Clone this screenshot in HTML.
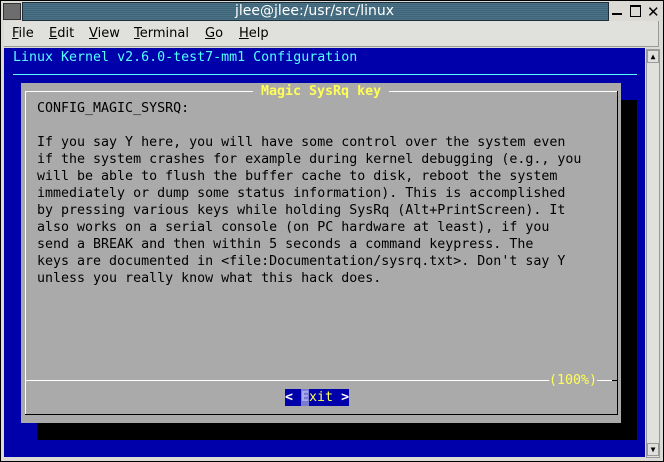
<!DOCTYPE html><html><head><style>
*{margin:0;padding:0}
body{width:664px;height:462px;background:#dcdad5;position:relative;overflow:hidden;font-family:"DejaVu Sans Mono","Liberation Mono",monospace}
.a{position:absolute}
.r{position:absolute;white-space:pre;font-size:13.3px;line-height:17px;height:17px}
.m{position:absolute;top:26px;font:13px 'DejaVu Sans',sans-serif;color:#000}
</style></head><body>
<div class="a" style="left:0;top:0;width:664px;height:462px;background:#dcdad5;border:1px solid #000;box-sizing:border-box"></div>
<div class="a" style="left:3px;top:3px;width:16px;height:15px;background:#6d6d6d;border:1px solid #333"></div>
<div class="a" style="left:22px;top:2px;width:585px;height:17px;background:repeating-linear-gradient(#4a7387 0 1px,#3f6478 1px 2px);border:1px solid #1d2e38"></div>
<div class="a" style="left:22px;top:2px;width:585px;height:17px;color:#fff;font:14px 'DejaVu Sans',sans-serif;text-align:center;line-height:18px">jlee@jlee:/usr/src/linux</div>
<div class="a" style="left:612px;top:13px;width:10px;height:2px;background:#000"></div>
<div class="a" style="left:630px;top:5px;width:9px;height:9px;border:1px solid #000;border-top-width:2px"></div>
<div class="a" style="left:647px;top:3px;font:bold 15px 'DejaVu Sans',sans-serif;color:#000">✕</div>
<div class="a" style="left:4px;top:21px;width:654px;height:25px;background:#e0e0dc;border-right:1px solid #999;border-bottom:1px solid #999"></div>
<div class="m" style="left:12px"><u>F</u>ile</div>
<div class="m" style="left:49px"><u>E</u>dit</div>
<div class="m" style="left:89px"><u>V</u>iew</div>
<div class="m" style="left:134px"><u>T</u>erminal</div>
<div class="m" style="left:205px"><u>G</u>o</div>
<div class="m" style="left:239px"><u>H</u>elp</div>
<div class="a" style="left:4px;top:48px;width:641px;height:409px;background:#0000aa"></div>
<div class="a" style="left:646px;top:49px;width:14px;height:409px;background:#e0e0dc;border:1px solid #999;box-sizing:border-box"></div>
<div class="a" style="left:647px;top:50px;width:12px;height:13px;border:1px solid #999;box-sizing:border-box;font-size:8px;text-align:center;line-height:12px">▲</div>
<div class="a" style="left:647px;top:443px;width:12px;height:13px;border:1px solid #999;box-sizing:border-box;font-size:8px;text-align:center;line-height:12px">▼</div>
<div class="r" style="left:13px;top:49px;color:#55ffff">Linux Kernel v2.6.0-test7-mm1 Configuration</div>
<div class="a" style="left:13px;top:74px;width:624px;height:1px;background:#55ffff"></div>
<div class="a" style="left:37px;top:100px;width:600px;height:340px;background:#000"></div>
<div class="a" style="left:21px;top:83px;width:600px;height:340px;background:#aaaaaa"></div>
<div class="a" style="left:25px;top:91px;width:592px;height:1px;background:#fff"></div>
<div class="a" style="left:25px;top:91px;width:1px;height:323px;background:#fff"></div>
<div class="a" style="left:25px;top:414px;width:593px;height:1px;background:#000"></div>
<div class="a" style="left:617px;top:91px;width:1px;height:324px;background:#000"></div>
<div class="a" style="left:25px;top:380px;width:592px;height:1px;background:#fff"></div>
<div class="a" style="left:612px;top:380px;width:6px;height:1px;background:#000"></div>
<div class="r" style="left:253px;top:83px;color:#ffff55;background:#aaaaaa;font-weight:bold"> Magic SysRq key </div>
<div class="r" style="left:549px;top:372px;color:#ffff55;background:#aaaaaa">(100%)</div>
<div class="r" style="left:37px;top:100px;color:#000">CONFIG_MAGIC_SYSRQ:

If you say Y here, you will have some control over the system even
if the system crashes for example during kernel debugging (e.g., you
will be able to flush the buffer cache to disk, reboot the system
immediately or dump some status information). This is accomplished
by pressing various keys while holding SysRq (Alt+PrintScreen). It
also works on a serial console (on PC hardware at least), if you
send a BREAK and then within 5 seconds a command keypress. The
keys are documented in &lt;file:Documentation/sysrq.txt&gt;. Don't say Y
unless you really know what this hack does.</div>
<div class="a" style="left:285px;top:389px;width:64px;height:17px;background:#0000aa"></div>
<div class="a" style="left:301px;top:389px;width:8px;height:17px;background:#7a7ad0"></div>
<div class="r" style="left:285px;top:389px;color:#fff;font-weight:bold">&lt; <span style="color:#aaaaee">E</span><span style="color:#ffff55;font-weight:normal">xit</span> &gt;</div>
</body></html>
